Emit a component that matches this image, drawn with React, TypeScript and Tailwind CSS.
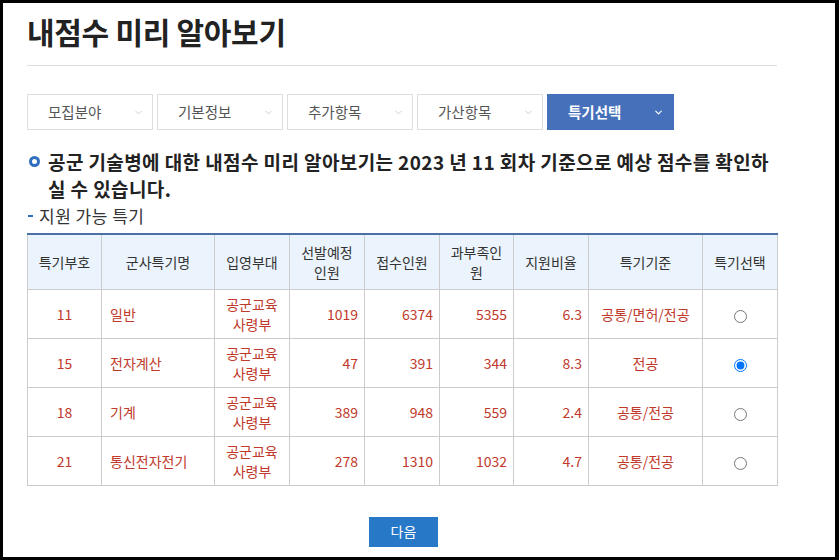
import { ChevronDown } from "lucide-react"

const tabs = ["모집분야", "기본정보", "추가항목", "가산항목"]

const rows = [
  { code: "11", name: "일반", quota: 1019, applied: 6374, excess: 5355, ratio: "6.3", basis: "공통/면허/전공", checked: false },
  { code: "15", name: "전자계산", quota: 47, applied: 391, excess: 344, ratio: "8.3", basis: "전공", checked: true },
  { code: "18", name: "기계", quota: 389, applied: 948, excess: 559, ratio: "2.4", basis: "공통/전공", checked: false },
  { code: "21", name: "통신전자전기", quota: 278, applied: 1310, excess: 1032, ratio: "4.7", basis: "공통/전공", checked: false },
]

const th = "border border-[#cccccc] border-t-2 border-t-[#4a6fa5] bg-[#ebf3fc] text-[14px] font-normal text-[#333333] leading-[20px] h-[55px] text-center"
const td = "border border-[#cccccc] text-[14px] text-[#c0392b] leading-[20px] h-[49px]"

export default function App() {
  return (
    <div
      className="bg-black pt-[3px] pl-[3px] pr-[4px] pb-[3px] w-[839px] h-[560px]"
      style={{ fontFamily: '"Noto Sans CJK KR", "Noto Sans", sans-serif' }}
    >
      <div className="bg-white h-full px-[24px] pt-[10px]">
        <div className="w-[750px]">
          {/* Title */}
          <h1 className="text-[30px] leading-[36px] font-bold text-[#222222] tracking-[-0.3px]">내점수 미리 알아보기</h1>
          <div className="mt-[16px] border-t border-[#dddddd]" />

          {/* Tabs */}
          <div className="mt-[28px] flex gap-[4px]">
            {tabs.map((t) => (
              <div
                key={t}
                className="w-[126px] h-[36px] border border-[#dddddd] flex items-center justify-between pl-[20px] pr-[8px] text-[14.5px] text-[#555555]"
              >
                <span>{t}</span>
                <ChevronDown size={11} strokeWidth={1.5} className="text-[#bbbbbb]" />
              </div>
            ))}
            <div className="w-[127px] h-[36px] bg-[#4670ba] flex items-center justify-between pl-[21px] pr-[10px] text-[14.5px] font-bold text-white">
              <span>특기선택</span>
              <ChevronDown size={11} strokeWidth={2.5} className="text-white" />
            </div>
          </div>

          {/* Description */}
          <div className="mt-[18px] flex items-start gap-[8px]">
            <span className="mt-[8px] ml-[2px] w-[11px] h-[11px] rounded-full border-[3px] border-[#2f6fc0] shrink-0" />
            <p className="text-[19px] leading-[27px] font-bold text-[#222222] tracking-[0.4px] whitespace-nowrap">
              공군 기술병에 대한 내점수 미리 알아보기는 2023 년 11 회차 기준으로 예상 점수를 확인하
              <br />실 수 있습니다.
            </p>
          </div>

          <div className="mt-[4px] flex items-center gap-[6px]">
            <span className="w-[5px] h-[2px] bg-[#2f6fc0] ml-[1px]" />
            <span className="text-[17px] leading-[20px] text-[#333333] tracking-[0.5px]">지원 가능 특기</span>
          </div>

          {/* Table */}
          <table className="mt-[7px] w-[750px] table-fixed border-collapse">
            <colgroup>
              <col className="w-[74px]" />
              <col className="w-[113px]" />
              <col className="w-[75px]" />
              <col className="w-[75px]" />
              <col className="w-[75px]" />
              <col className="w-[74px]" />
              <col className="w-[75px]" />
              <col className="w-[114px]" />
              <col className="w-[75px]" />
            </colgroup>
            <thead>
              <tr>
                <th className={th}>특기부호</th>
                <th className={th}>군사특기명</th>
                <th className={th}>입영부대</th>
                <th className={th}>선발예정<br />인원</th>
                <th className={th}>접수인원</th>
                <th className={th}>과부족인<br />원</th>
                <th className={th}>지원비율</th>
                <th className={th}>특기기준</th>
                <th className={th}>특기선택</th>
              </tr>
            </thead>
            <tbody>
              {rows.map((r) => (
                <tr key={r.code}>
                  <td className={`${td} text-center`}>{r.code}</td>
                  <td className={`${td} text-left pl-[8px]`}>{r.name}</td>
                  <td className={`${td} text-center`}>공군교육<br />사령부</td>
                  <td className={`${td} text-right pr-[6px]`}>{r.quota}</td>
                  <td className={`${td} text-right pr-[6px]`}>{r.applied}</td>
                  <td className={`${td} text-right pr-[6px]`}>{r.excess}</td>
                  <td className={`${td} text-right pr-[6px]`}>{r.ratio}</td>
                  <td className={`${td} text-center`}>{r.basis}</td>
                  <td className={`${td} text-center`}>
                    <input type="radio" name="pick" defaultChecked={r.checked} className="w-[13px] h-[13px] align-middle mt-[1px]" />
                  </td>
                </tr>
              ))}
            </tbody>
          </table>

          {/* Next */}
          <div className="mt-[31px] flex justify-center">
            <button className="w-[69px] h-[30px] bg-[#2878c8] text-white text-[14px] ml-[3px]">다음</button>
          </div>
        </div>
      </div>
    </div>
  )
}
